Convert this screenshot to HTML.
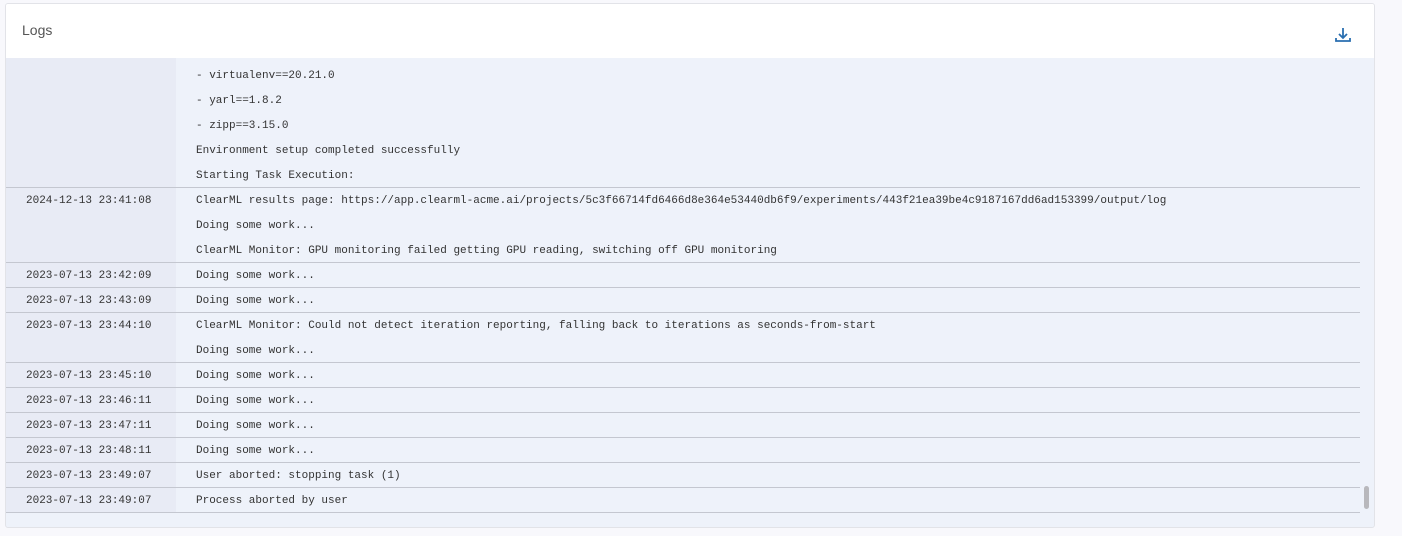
<!DOCTYPE html>
<html><head><style>
body{margin:0;width:1402px;height:536px;background:#f8f8fc;position:relative;overflow:hidden;font-family:"Liberation Sans",sans-serif}
.panel{position:absolute;left:5px;top:3px;width:1368px;height:523px;border:1px solid #e2e3e8;border-radius:3px;background:#eef2fa;overflow:hidden}
.hdr{position:absolute;left:0;top:0;width:100%;height:54px;background:#fff}
.hdr span{position:absolute;left:16px;top:18px;font-size:14px;color:#555}
.lc{position:absolute;left:0;top:54px;width:170px;height:455px;background:#e8ebf5}
.row{position:absolute;left:0;width:1354px;font-family:"Liberation Mono",monospace;font-size:11px;color:#333;border-bottom:1px solid #c4c7d0}
.l{position:absolute;left:190px;height:25px;line-height:27px;white-space:pre}
.t{position:absolute;left:20px;height:25px;line-height:27px}
.sb{position:absolute;left:1358px;top:482px;width:5px;height:23px;background:#b8b8bc;border-radius:3px}
</style></head><body>
<div class="panel">
<div class="hdr"><span>Logs</span>
<svg style="position:absolute;left:1328px;top:22px" width="18" height="18" viewBox="0 0 18 18" fill="none" stroke="#2a6fb0" stroke-width="1.8"><path d="M9 2v10M5 8l4 4 4-4M2 12v3h14v-3"/></svg></div>
<div class="lc"></div>
<div class="row" style="top:59px;height:124px;border-bottom:1px solid #c4c7d0">
<div class="l" style="top:0">- virtualenv==20.21.0</div><div class="l" style="top:25px">- yarl==1.8.2</div><div class="l" style="top:50px">- zipp==3.15.0</div><div class="l" style="top:75px">Environment setup completed successfully</div><div class="l" style="top:100px">Starting Task Execution:</div></div>
<div class="row" style="top:184px;height:74px"><div class="t" style="top:0">2024-12-13 23:41:08</div><div class="l" style="top:0">ClearML results page: https://app.clearml-acme.ai/projects/5c3f66714fd6466d8e364e53440db6f9/experiments/443f21ea39be4c9187167dd6ad153399/output/log</div><div class="l" style="top:25px">Doing some work...</div><div class="l" style="top:50px">ClearML Monitor: GPU monitoring failed getting GPU reading, switching off GPU monitoring</div></div>
<div class="row" style="top:259px;height:24px"><div class="t">2023-07-13 23:42:09</div><div class="l">Doing some work...</div></div>
<div class="row" style="top:284px;height:24px"><div class="t">2023-07-13 23:43:09</div><div class="l">Doing some work...</div></div>
<div class="row" style="top:309px;height:49px"><div class="t">2023-07-13 23:44:10</div><div class="l">ClearML Monitor: Could not detect iteration reporting, falling back to iterations as seconds-from-start</div><div class="l" style="top:25px">Doing some work...</div></div>
<div class="row" style="top:359px;height:24px"><div class="t">2023-07-13 23:45:10</div><div class="l">Doing some work...</div></div>
<div class="row" style="top:384px;height:24px"><div class="t">2023-07-13 23:46:11</div><div class="l">Doing some work...</div></div>
<div class="row" style="top:409px;height:24px"><div class="t">2023-07-13 23:47:11</div><div class="l">Doing some work...</div></div>
<div class="row" style="top:434px;height:24px"><div class="t">2023-07-13 23:48:11</div><div class="l">Doing some work...</div></div>
<div class="row" style="top:459px;height:24px"><div class="t">2023-07-13 23:49:07</div><div class="l">User aborted: stopping task (1)</div></div>
<div class="row" style="top:484px;height:24px"><div class="t">2023-07-13 23:49:07</div><div class="l">Process aborted by user</div></div>
<div class="sb"></div>
</div>
</body></html>
